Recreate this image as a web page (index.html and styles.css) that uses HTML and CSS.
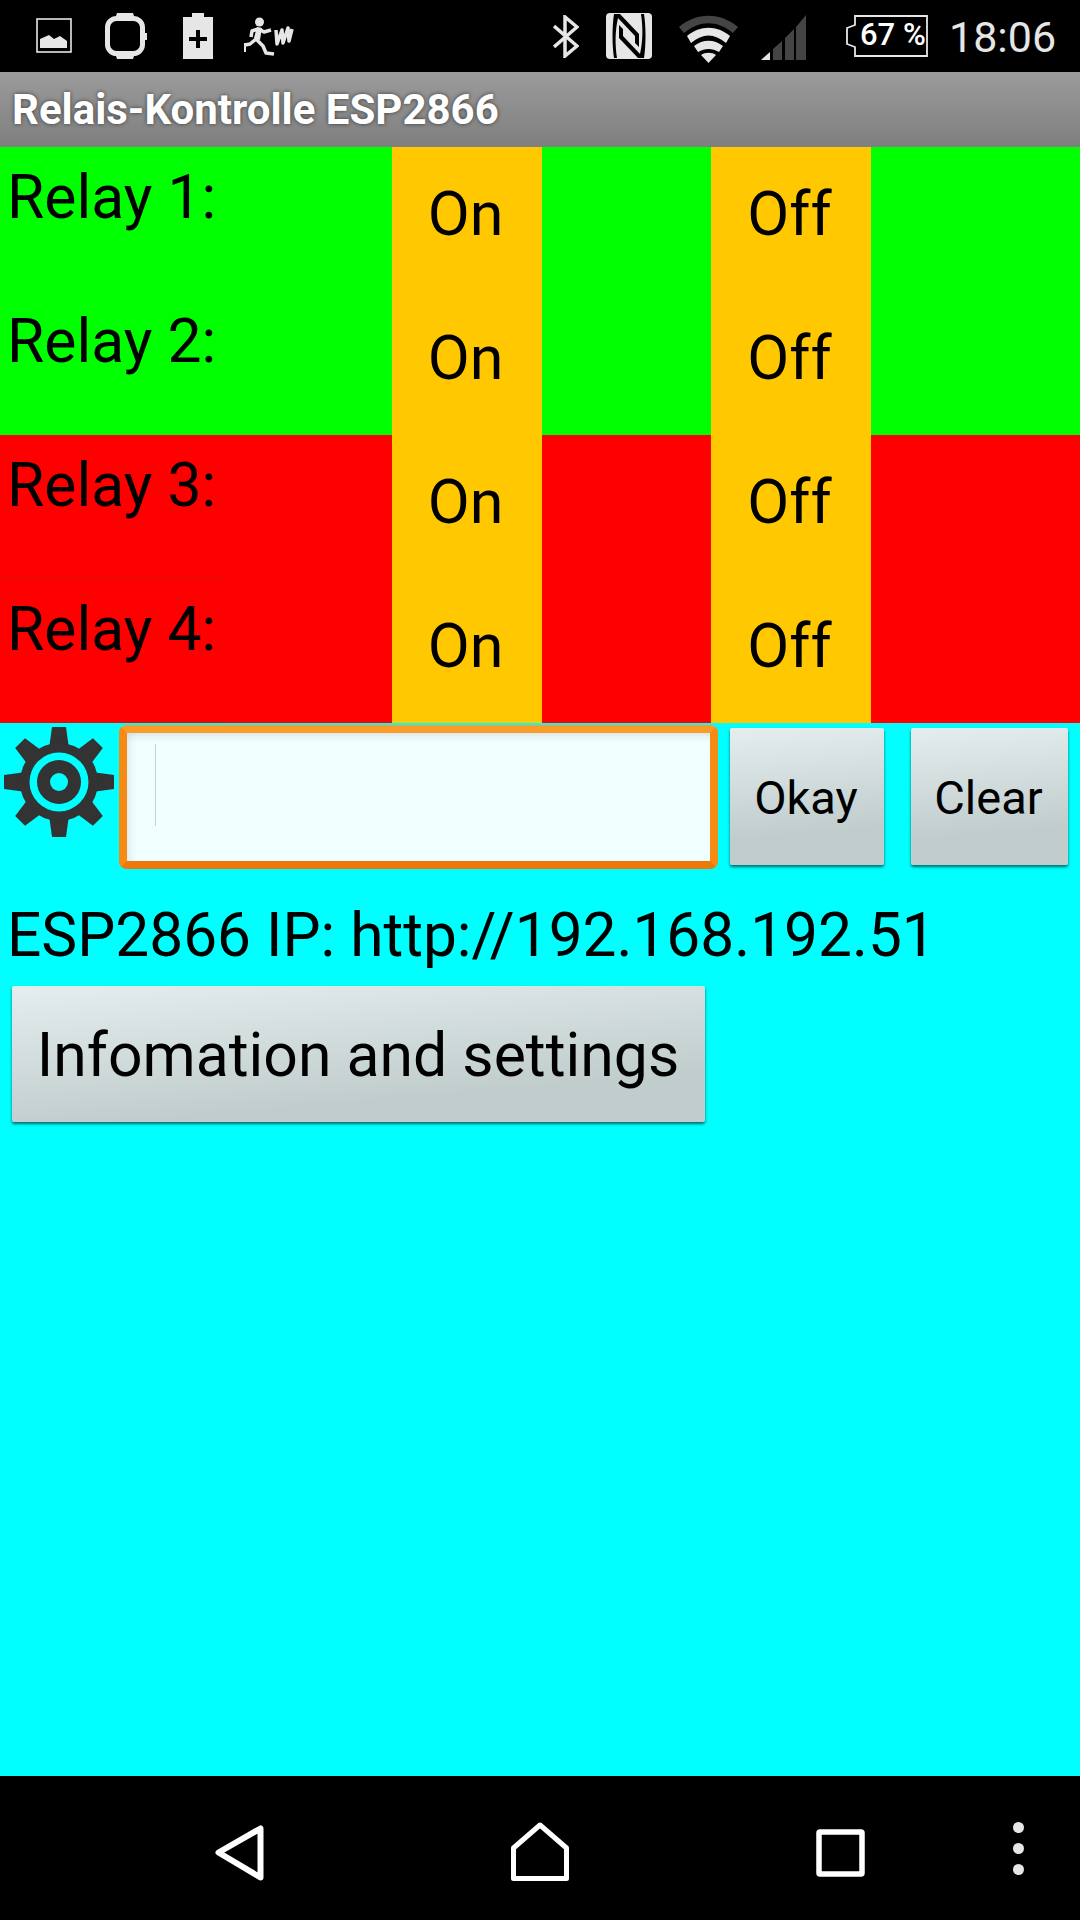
FILE: index.html
```html
<!DOCTYPE html>
<html lang="en">

<head>
  <meta charset="UTF-8">
  <meta name="viewport" content="width=device-width, initial-scale=1.0">
  <title>Relais-Kontrolle ESP2866</title>
  <link rel="stylesheet" href="styles.css">
</head>

<body>
  <div class="screen">

    <div class="status-bar">
      <svg class="icon-picture" width="36" height="35" viewBox="0 0 36 35">
        <rect x="1" y="1" width="34" height="33" fill="none" stroke="#e6e6e6" stroke-width="1.6" />
        <path d="M4 30V21L13 17L18 21L24 18L31 23V30Z" fill="#e6e6e6" />
      </svg>
      <svg class="icon-watch" width="42" height="46" viewBox="0 0 42 46">
        <path d="M10 6L12 0H28L30 6ZM10 40L12 46H28L30 40Z" fill="#e6e6e6" />
        <rect x="2.5" y="5.5" width="35" height="35" rx="9" fill="none" stroke="#e6e6e6" stroke-width="5" />
        <rect x="39" y="20" width="3" height="7" fill="#e6e6e6" />
      </svg>
      <svg class="icon-charge" width="30" height="46" viewBox="0 0 30 46">
        <path d="M9 0H21V4H30V46H0V4H9Z" fill="#e6e6e6" />
        <path d="M13 17H17V24H24V28H17V35H13V28H6V24H13Z" fill="#000" />
      </svg>
      <svg class="icon-runner" width="50" height="39" viewBox="0 0 50 39">
        <circle cx="15.5" cy="5" r="4.5" fill="#e6e6e6" />
        <path d="M15 11L12 22L6 27L1 28M12 22L19 29L22 36L30 37M14 12L8 14L7 20M15 12L20 15L27 13" fill="none" stroke="#e6e6e6" stroke-width="3.500" stroke-linejoin="round" />
        <path d="M13 10L18 11L16 23L10 21Z" fill="#e6e6e6" />
        <path d="M0 26L2 26L2 35L0 35Z" fill="#e6e6e6" />
        <path d="M32 13L33 27L38 13L39 26L44 11L45 24L48 12" fill="none" stroke="#e6e6e6" stroke-width="3.500" stroke-linejoin="round" />
      </svg>
      <svg class="icon-bluetooth" width="26" height="43" viewBox="0 0 26 43">
        <path d="M1 11L24 31L12 41V2L24 12L1 32" fill="none" stroke="#e6e6e6" stroke-width="3.500" />
      </svg>
      <svg class="icon-nfc" width="46" height="46" viewBox="0 0 46 46">
        <rect width="46" height="46" rx="4" fill="#e6e6e6" />
        <path d="M8 1H14L33 21V34L29 30V23L12 5C9 18 9 32 11 45H8C6 32 6 14 8 1Z" fill="#000" />
        <path d="M8 1H14L33 21V34L29 30V23L12 5C9 18 9 32 11 45H8C6 32 6 14 8 1Z" fill="#000" transform="rotate(180 23 23)" />
      </svg>
      <svg class="icon-wifi" width="59" height="48" viewBox="0 0 59 48">
        <path d="M0 12C18 -3 41 -3 59 12L54 18C38 5 21 5 5 18Z" fill="#444" />
        <path d="M8 21C21 10 38 10 51 21L47 28C35 18 24 18 12 28Z" fill="#e6e6e6" />
        <path d="M15 31C24 24 35 24 44 31L40 37C33 33 26 33 19 37Z" fill="#e6e6e6" />
        <path d="M22 40C26 37 33 37 37 40L29.500 48Z" fill="#e6e6e6" />
      </svg>
      <svg class="icon-signal" width="45" height="45" viewBox="0 0 45 45">
        <path d="M0 45L9 37V45Z" fill="#e6e6e6" />
        <path d="M12 34L21 26V45H12ZM24 23L33 14V45H24ZM35 12L45 0V45H35Z" fill="#444" />
      </svg>
      <div class="battery">
        <svg class="battery-outline" width="82" height="42" viewBox="0 0 82 42">
          <path d="M9 1H81V41H9V32L1 29V13L9 10Z" fill="none" stroke="#e6e6e6" stroke-width="1.800" />
        </svg>
        <div class="battery-text">67 %</div>
      </div>
      <div class="clock">18:06</div>
    </div>

    <div class="title-bar">Relais-Kontrolle ESP2866</div>

    <div class="relays">
      <div class="relay-row on">
        <div class="relay-label">Relay 1:</div>
        <div class="relay-btn btn-on">On</div>
        <div class="relay-btn btn-off">Off</div>
      </div>
      <div class="relay-row on">
        <div class="relay-label">Relay 2:</div>
        <div class="relay-btn btn-on">On</div>
        <div class="relay-btn btn-off">Off</div>
      </div>
      <div class="relay-row off">
        <div class="relay-label">Relay 3:</div>
        <div class="relay-btn btn-on">On</div>
        <div class="relay-btn btn-off">Off</div>
      </div>
      <div class="relay-row off">
        <div class="relay-label">Relay 4:</div>
        <div class="relay-btn btn-on">On</div>
        <div class="relay-btn btn-off">Off</div>
      </div>
    </div>

    <div class="content">
      <div class="input-row">
        <svg class="gear" width="110" height="110" viewBox="0 0 110 110">
          <g fill="#333">
            <polygon points="48,0 62,0 65,22 45,22" />
            <polygon points="48,0 62,0 65,22 45,22" transform="rotate(45 55 55)" />
            <polygon points="48,0 62,0 65,22 45,22" transform="rotate(90 55 55)" />
            <polygon points="48,0 62,0 65,22 45,22" transform="rotate(135 55 55)" />
            <polygon points="48,0 62,0 65,22 45,22" transform="rotate(180 55 55)" />
            <polygon points="48,0 62,0 65,22 45,22" transform="rotate(225 55 55)" />
            <polygon points="48,0 62,0 65,22 45,22" transform="rotate(270 55 55)" />
            <polygon points="48,0 62,0 65,22 45,22" transform="rotate(315 55 55)" />
            <circle cx="55" cy="55" r="39" />
          </g>
          <circle cx="55" cy="55" r="29.500" fill="#0ff" />
          <circle cx="55" cy="55" r="22" fill="#333" />
          <circle cx="55" cy="55" r="9" fill="#0ff" />
        </svg>
        <div class="text-input">
          <div class="caret"></div>
        </div>
        <div class="btn btn-okay">Okay</div>
        <div class="btn btn-clear">Clear</div>
      </div>

      <div class="ip-label">ESP2866 IP: http://192.168.192.51</div>

      <div class="btn btn-info">Infomation and settings</div>
    </div>

    <div class="nav-bar">
      <svg class="nav-back" width="50" height="56" viewBox="0 0 50 56">
        <path d="M45.500 3.500V52.500L3.500 27.500Z" fill="none" stroke="#fff" stroke-width="6" stroke-linejoin="round" />
      </svg>
      <svg class="nav-home" width="58" height="59" viewBox="0 0 58 59">
        <path d="M2.500 56.500V26L29 3L55.500 26V56.500Z" fill="none" stroke="#fff" stroke-width="5" stroke-linejoin="round" />
      </svg>
      <svg class="nav-recent" width="49" height="48" viewBox="0 0 49 48">
        <rect x="3" y="3" width="43" height="42" rx="1" fill="none" stroke="#fff" stroke-width="5.500" />
      </svg>
      <div class="nav-dots">
        <span></span>
        <span></span>
        <span></span>
      </div>
    </div>

  </div>
</body>

</html>
```

FILE: styles.css
```css
* {
  margin: 0;
  padding: 0;
  box-sizing: border-box;
}

body {
  font-family: Roboto, "Liberation Sans", sans-serif;
  color: #000;
  background: #000;
}

.screen {
  width: 1080px;
  height: 1920px;
  display: flex;
  flex-direction: column;
  overflow: hidden;
}

/* status bar */

.status-bar {
  height: 72px;
  background: #000;
  display: flex;
  align-items: flex-start;
  flex-shrink: 0;
}

.status-bar svg {
  display: block;
  flex-shrink: 0;
}

.icon-picture {
  margin: 18px 0 0 36px;
}

.icon-watch {
  margin: 13px 0 0 33px;
}

.icon-charge {
  margin: 13px 0 0 36px;
}

.icon-runner {
  margin: 17px 0 0 31px;
}

.icon-bluetooth {
  margin: 15px 0 0 259px;
}

.icon-nfc {
  margin: 13px 0 0 27px;
}

.icon-wifi {
  margin: 15px 0 0 27px;
}

.icon-signal {
  margin: 15px 0 0 23px;
}

.battery {
  position: relative;
  width: 82px;
  height: 42px;
  margin: 15px 0 0 40px;
  flex-shrink: 0;
}

.battery-outline {
  position: absolute;
  top: 0;
  left: 0;
}

.battery-text {
  padding-left: 14px;
  color: #fff;
  font-size: 31px;
  font-weight: 500;
  line-height: 40px;
  white-space: nowrap;
}

.clock {
  margin: 12px 0 0 21px;
  color: #e6e6e6;
  font-size: 43px;
  line-height: 50px;
  white-space: nowrap;
}

/* title */

.title-bar {
  height: 75px;
  flex-shrink: 0;
  background: linear-gradient(#9b9b9b, #7f7f7f);
  color: #fff;
  font-size: 42px;
  font-weight: 700;
  line-height: 75px;
  padding-left: 12px;
  text-shadow: 0 0 4px rgba(0, 0, 0, 0.6);
}

/* relay table */

.relay-row {
  height: 144px;
  display: grid;
  grid-template-columns: 392px 150px 169px 160px 1fr;
}

.relay-row.on {
  background: #0f0;
}

.relay-row.off {
  background: #f00;
}

.relay-row.off .relay-label {
  width: 223px;
  border-bottom: 1px solid rgba(120, 60, 0, 0.3);
}

.relay-label {
  font-size: 60.600px;
  line-height: 70px;
  padding: 16px 0 0 7px;
  white-space: nowrap;
}

.relay-btn {
  background: #ffc800;
  font-size: 61px;
  display: flex;
  align-items: center;
  justify-content: center;
  padding: 0 3px 11px 0;
}

.btn-on {
  grid-column: 2;
}

.btn-off {
  grid-column: 4;
}

/* cyan part */

.content {
  flex: 1;
  background: #0ff;
}

.input-row {
  display: flex;
  align-items: flex-start;
  height: 180px;
}

.gear {
  display: block;
  flex-shrink: 0;
  margin: 4px 0 0 4px;
}

.text-input {
  width: 599px;
  height: 144px;
  margin: 2px 0 0 5px;
  flex-shrink: 0;
  background: #f0ffff;
  border: 8px solid #f58a14;
  border-top-color: #fb9c28;
  border-bottom-color: #ef780a;
  border-radius: 8px;
  box-shadow: inset 0 8px 8px -6px rgba(150, 170, 170, 0.35), inset 8px 0 8px -6px rgba(150, 170, 170, 0.25);
  padding: 11px 0 0 28px;
}

.caret {
  width: 1px;
  height: 82px;
  background: #c5d2d2;
}

.btn {
  background: linear-gradient(175deg, #e4eeee, #c1cccc 75%);
  border-radius: 2px;
  box-shadow: 0 2px 3px rgba(0, 60, 60, 0.75);
  display: flex;
  align-items: center;
  justify-content: center;
  white-space: nowrap;
  flex-shrink: 0;
}

.btn-okay,
.btn-clear {
  height: 137px;
  margin-top: 5px;
  font-size: 47px;
  padding-top: 2px;
}

.btn-okay {
  width: 154px;
  margin-left: 12px;
  padding-right: 2px;
}

.btn-clear {
  width: 157px;
  margin-left: 27px;
  padding-right: 2px;
}

.ip-label {
  font-size: 60.400px;
  line-height: 66px;
  padding-left: 7px;
  white-space: nowrap;
}

.btn-info {
  width: 693px;
  height: 136px;
  margin: 17px 0 0 12px;
  font-size: 60.700px;
  padding: 3px 1px 0 0;
}

/* nav bar */

.nav-bar {
  height: 144px;
  background: #000;
  flex-shrink: 0;
  display: flex;
  align-items: flex-start;
}

.nav-bar svg {
  display: block;
  flex-shrink: 0;
}

.nav-back {
  margin: 49px 0 0 215px;
}

.nav-home {
  margin: 46px 0 0 246px;
}

.nav-recent {
  margin: 53px 0 0 247px;
}

.nav-dots {
  margin: 46px 0 0 148px;
  display: flex;
  flex-direction: column;
  gap: 10px;
}

.nav-dots span {
  display: block;
  width: 11px;
  height: 11px;
  border-radius: 50%;
  background: #e6e6e6;
}
```
